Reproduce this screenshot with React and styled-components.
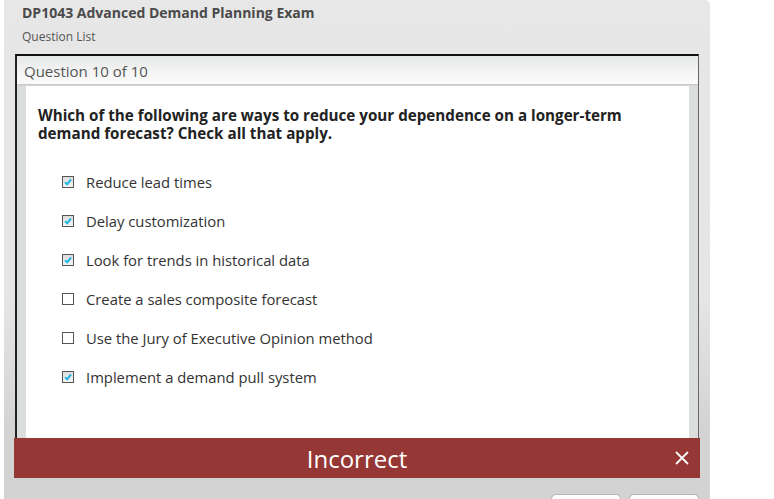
import React from "react";
import styled, { createGlobalStyle } from "styled-components";

const Global = createGlobalStyle`
  html, body { margin: 0; padding: 0; background: #fff; }
  body { font-family: "Open Sans", "Noto Sans", sans-serif; }
`;

const Page = styled.div`
  width: 774px;
  height: 499px;
  overflow: hidden;
  background: #fff;
  padding-left: 4px;
  box-sizing: border-box;
`;

const Panel = styled.div`
  position: relative;
  width: 706px;
  height: 540px;
  background: linear-gradient(#e7e7e7 0, #e5e5e5 300px, #d3d3d3 430px, #d3d3d3 100%);
  border-top-right-radius: 5px;
  display: flex;
  flex-direction: column;
`;

const Title = styled.div`
  padding: 3px 0 0 18px;
  font-size: 14px;
  font-weight: 700;
  color: #4a4a4a;
  line-height: 20px;
`;

const SubLink = styled.div`
  padding: 6px 0 0 18px;
  font-size: 12px;
  color: #555;
  line-height: 15px;
`;

const Frame = styled.div`
  margin: 10px 11px 0 11px;
  border-top: 2px solid #111;
  border-left: 2px solid #222;
  border-right: 1px solid #6a6a6a;
  display: flex;
  flex-direction: column;
  height: 420px;
`;

const FrameHeader = styled.div`
  height: 28px;
  padding: 2px 0 0 7px;
  box-sizing: border-box;
  display: flex;
  align-items: center;
  font-size: 15px;
  color: #555;
  background: linear-gradient(#e6e8e7, #f4f5f4 60%, #fafafa);
  box-shadow: 0 1px 2px rgba(0, 0, 0, 0.12);
  position: relative;
  z-index: 1;
`;

const FrameBody = styled.div`
  flex: 1;
  background: #dcdedd;
  padding: 2px 9px 0 9px;
  display: flex;
`;

const Content = styled.div`
  flex: 1;
  background: #fff;
  padding: 20px 12px 0 12px;
`;

const Question = styled.div`
  font-size: 15.2px;
  font-weight: 700;
  color: #222;
  line-height: 18px;
  width: 620px;
`;

const Options = styled.div`
  margin-top: 31px;
  padding-left: 24px;
  display: flex;
  flex-direction: column;
  gap: 21px;
`;

const Option = styled.div`
  display: flex;
  align-items: center;
  height: 18px;
  font-size: 14.8px;
  color: #333;
`;

const Box = styled.span`
  width: 10px;
  height: 10px;
  border: 1px solid #555;
  background: ${(p) => (p.$checked ? "linear-gradient(#dcdcdc, #f5f5f5)" : "#fff")};
  margin-right: 12px;
  display: inline-flex;
  align-items: center;
  justify-content: center;
  flex: none;
`;

const Banner = styled.div`
  position: absolute;
  left: 10px;
  top: 438px;
  width: 686px;
  height: 40px;
  background: #953735;
  color: #fff;
  display: flex;
  align-items: center;
  justify-content: center;
  font-size: 24px;
`;

const Close = styled.span`
  position: absolute;
  right: 11px;
  top: 13px;
  display: flex;
`;

const Buttons = styled.div`
  position: absolute;
  top: 494px;
  right: 11px;
  display: flex;
  gap: 8px;
`;

const Btn = styled.div`
  width: 68px;
  height: 30px;
  background: #fff;
  border: 1px solid #b5b5b5;
  border-radius: 5px;
`;

const Check = () => (
  <svg width="8" height="8" viewBox="0 0 8 8">
    <path d="M1 4.2 L3.2 6.2 L7 1.5" fill="none" stroke="#22b6e3" strokeWidth="2" />
  </svg>
);

const options = [
  ["Reduce lead times", true],
  ["Delay customization", true],
  ["Look for trends in historical data", true],
  ["Create a sales composite forecast", false],
  ["Use the Jury of Executive Opinion method", false],
  ["Implement a demand pull system", true],
];

export default function App() {
  return (
    <>
      <Global />
      <Page>
        <Panel>
          <Title>DP1043 Advanced Demand Planning Exam</Title>
          <SubLink>Question List</SubLink>
          <Frame>
            <FrameHeader>Question 10 of 10</FrameHeader>
            <FrameBody>
              <Content>
                <Question>
                  Which of the following are ways to reduce your dependence on a longer-term demand
                  forecast? Check all that apply.
                </Question>
                <Options>
                  {options.map(([t, c]) => (
                    <Option key={t}>
                      <Box $checked={c}>{c && <Check />}</Box>
                      {t}
                    </Option>
                  ))}
                </Options>
              </Content>
            </FrameBody>
          </Frame>
          <Banner>
            Incorrect
            <Close>
              <svg width="14" height="14" viewBox="0 0 14 14">
                <path d="M1 1 L13 13 M13 1 L1 13" stroke="#fff" strokeWidth="1.8" />
              </svg>
            </Close>
          </Banner>
          <Buttons>
            <Btn />
            <Btn />
          </Buttons>
        </Panel>
      </Page>
    </>
  );
}
